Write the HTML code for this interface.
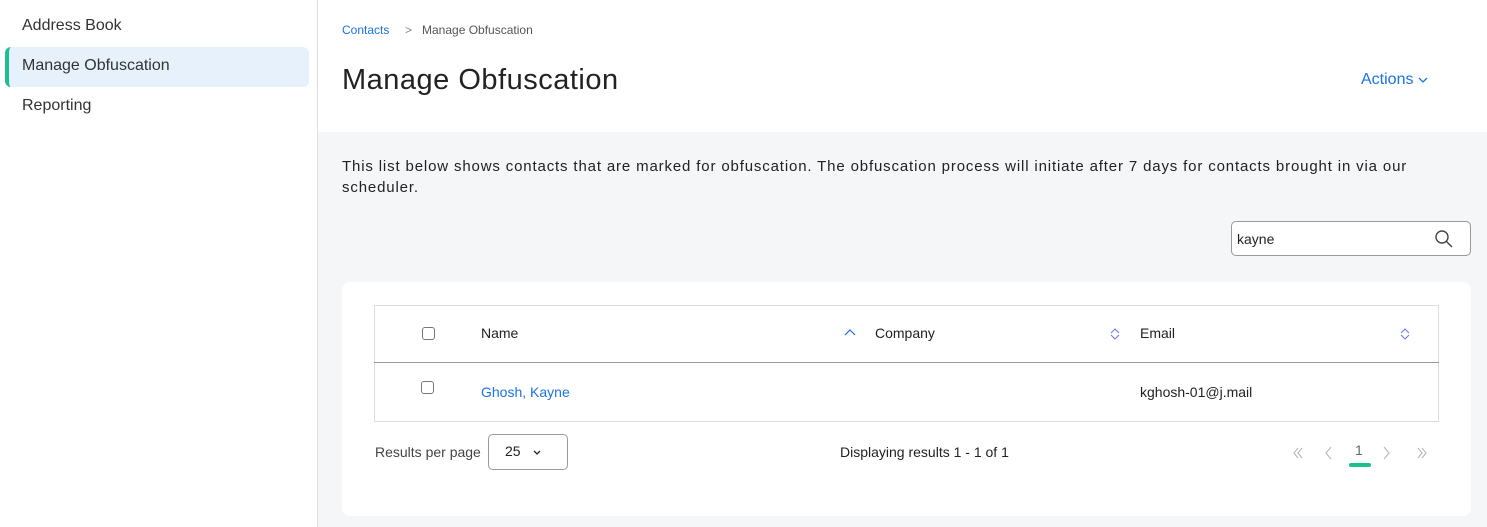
<!DOCTYPE html>
<html><head><style>
*{box-sizing:border-box;margin:0;padding:0}
body{width:1487px;height:527px;overflow:hidden;font-family:"Liberation Sans",sans-serif;background:#fff;position:relative;color:#222}
.abs{position:absolute}
.side{left:0;top:0;width:318px;height:527px;border-right:1px solid #ddd;background:#fff}
.nav{position:absolute;left:22px;font-size:16px;color:#333}
.active{left:5px;top:47px;width:304px;height:40px;background:#e6f1fc;border-radius:6px;border-left:4px solid #1cc08e}
.gray{left:318px;top:132px;width:1169px;height:395px;background:#f5f6f8}
.card{left:342px;top:282px;width:1129px;height:234px;background:#fff;border-radius:8px}
.cb{width:13px;height:13px;border:1px solid #777;border-radius:3px;background:#fff}
.sm{font-size:14px}
</style></head><body>
<div class="abs side"></div>
<div class="abs active"></div>
<div class="nav" style="top:17px">Address Book</div>
<div class="nav" style="top:57px">Manage Obfuscation</div>
<div class="nav" style="top:97px">Reporting</div>

<div class="abs" style="left:342px;top:23px;font-size:12px;color:#1a73e8">Contacts</div>
<div class="abs" style="left:405px;top:23px;font-size:12px;color:#888">&gt;</div>
<div class="abs" style="left:422px;top:23px;font-size:12px;color:#555">Manage Obfuscation</div>
<div class="abs" style="left:342px;top:64px;font-size:29px;color:#222;letter-spacing:0.5px">Manage Obfuscation</div>
<div class="abs" style="left:1361px;top:71px;font-size:16px;color:#1a73e8">Actions <svg width="10" height="8" viewBox="0 0 10 8"><path d="M1 2l4 4 4-4" stroke="#1a73e8" fill="none" stroke-width="1.3"/></svg></div>

<div class="abs gray"></div>
<div class="abs" style="left:342px;top:156px;width:1090px;font-size:15px;line-height:21px;color:#222;letter-spacing:0.85px">This list below shows contacts that are marked for obfuscation. The obfuscation process will initiate after 7 days for contacts brought in via our scheduler.</div>
<div class="abs" style="left:1231px;top:221px;width:240px;height:35px;border:1px solid #999;border-radius:5px;background:#fff"></div>
<div class="abs" style="left:1237px;top:231px;font-size:14px;color:#222">kayne</div>
<svg class="abs" style="left:1434px;top:229px" width="20" height="20" viewBox="0 0 20 20"><circle cx="8" cy="8" r="6" stroke="#444" fill="none" stroke-width="1.4"/><path d="M12.5 12.5l5.5 5.5" stroke="#444" stroke-width="1.4"/></svg>

<div class="abs card"></div>
<div class="abs" style="left:374px;top:305px;width:1065px;height:117px;border:1px solid #ddd"></div>
<div class="abs" style="left:374px;top:362px;width:1065px;height:1px;background:#999"></div>
<div class="abs cb" style="left:422px;top:327px"></div>
<div class="abs cb" style="left:421px;top:381px"></div>
<div class="abs sm" style="left:481px;top:325px">Name</div>
<svg class="abs" style="left:844px;top:328px" width="12" height="10"><path d="M1 7l5-5 5 5" stroke="#1a73e8" fill="none" stroke-width="1.2"/></svg>
<div class="abs sm" style="left:875px;top:325px">Company</div>
<svg class="abs" style="left:1109px;top:327px" width="12" height="14"><path d="M2 6l4-4 4 4M2 8l4 4 4-4" stroke="#6b7cf5" fill="none" stroke-width="1.1"/></svg>
<div class="abs sm" style="left:1140px;top:325px">Email</div>
<svg class="abs" style="left:1399px;top:327px" width="12" height="14"><path d="M2 6l4-4 4 4M2 8l4 4 4-4" stroke="#6b7cf5" fill="none" stroke-width="1.1"/></svg>
<div class="abs sm" style="left:481px;top:384px;color:#1a73e8">Ghosh, Kayne</div>
<div class="abs sm" style="left:1140px;top:384px">kghosh-01@j.mail</div>

<div class="abs sm" style="left:375px;top:444px;color:#444">Results per page</div>
<div class="abs" style="left:488px;top:434px;width:80px;height:36px;border:1px solid #999;border-radius:5px"></div>
<div class="abs sm" style="left:505px;top:443px">25</div>
<svg class="abs" style="left:532px;top:449px" width="10" height="8"><path d="M2 2l3 3 3-3" stroke="#222" fill="none" stroke-width="1.3"/></svg>
<div class="abs sm" style="left:840px;top:444px">Displaying results 1 - 1 of 1</div>
<svg class="abs" style="left:1290px;top:443px" width="140" height="20"><g stroke="#bbb" fill="none" stroke-width="1.2"><path d="M8 5l-4 5 4 5M12 5l-4 5 4 5"/><path d="M41 4l-5 6 5 6"/><path d="M94 4l5 6-5 6"/><path d="M128 5l4 5-4 5M132 5l4 5-4 5"/></g></svg>
<div class="abs sm" style="left:1355px;top:442px;color:#666">1</div>
<div class="abs" style="left:1349px;top:463px;width:22px;height:4px;border-radius:2px;background:#1cc08e"></div>
</body></html>
